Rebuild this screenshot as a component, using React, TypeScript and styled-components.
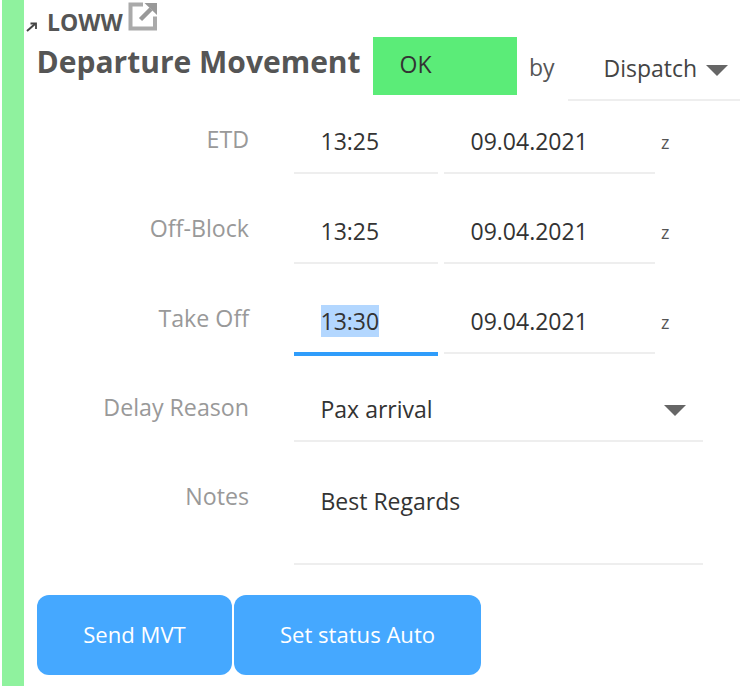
import React from "react";
import styled, { createGlobalStyle } from "styled-components";

const Global = createGlobalStyle`
  html, body { margin: 0; padding: 0; background: #fff; }
  body { font-family: "Open Sans", "Liberation Sans", sans-serif; color: #333; }
  ::selection { background: #b3d7ff; }
`;

const Page = styled.div`
  width: 740px;
  height: 686px;
  overflow: hidden;
  padding-left: 2px;
  box-sizing: border-box;
  display: flex;
`;
const Stripe = styled.div`
  width: 22px;
  flex: none;
  background: #8ff29e;
`;
const Content = styled.div`
  flex: 1;
  min-width: 0;
  display: flex;
  flex-direction: column;
`;
const Airport = styled.div`
  height: 37px;
  display: flex;
  align-items: flex-start;
  padding-left: 2px;
`;
const AirportName = styled.span`
  font-size: 23px;
  line-height: 30px;
  font-weight: 700;
  color: #555;
  margin: 7px 0 0 9px;
`;
const TinyArrow = styled.svg`
  margin-top: 20px;
  flex: none;
`;
const ExternalIcon = styled.svg`
  margin: 1px 0 0 5px;
  flex: none;
`;
const TitleRow = styled.div`
  height: 64px;
  display: flex;
  align-items: flex-start;
  padding-left: 12.5px;
`;
const Title = styled.h1`
  margin: 5px 0 0;
  width: 336.5px;
  flex: none;
  font-size: 30px;
  line-height: 40px;
  font-weight: 700;
  color: #555;
  white-space: nowrap;
`;
const StatusBox = styled.div`
  width: 144px;
  height: 58px;
  flex: none;
  background: #5bec78;
  font-size: 23px;
  line-height: 54px;
  padding-left: 26.5px;
  box-sizing: border-box;
  color: #333;
`;
const By = styled.span`
  font-size: 23px;
  line-height: 31px;
  color: #555;
  margin: 15px 0 0 12px;
  width: 39px;
  flex: none;
`;
const DispatchSelect = styled.div`
  flex: 1;
  height: 64px;
  box-sizing: border-box;
  border-bottom: 2px solid #eee;
  padding: 15px 0 0 35.5px;
  font-size: 23px;
  line-height: 32px;
  display: flex;
  align-items: flex-start;
  white-space: nowrap;
  color: #444;
`;
const Caret = styled.span<{ $top: number }>`
  width: 0;
  height: 0;
  border-left: 11px solid transparent;
  border-right: 11px solid transparent;
  border-top: 11px solid #666;
  margin-top: ${(p) => p.$top}px;
`;
const DispatchCaret = styled(Caret)`
  margin-left: 8.5px;
`;
const Row = styled.div<{ $height: number }>`
  height: ${(p) => p.$height}px;
  display: flex;
  align-items: flex-end;
  padding-right: 37px;
`;
const Label = styled.label<{ $bottom: number }>`
  width: 225px;
  flex: none;
  text-align: right;
  font-size: 23.2px;
  line-height: 32px;
  color: #999;
  align-self: flex-end;
  margin-bottom: ${(p) => p.$bottom}px;
`;
const Field = styled.div<{ $width?: number; $active?: boolean; $height?: number; $top?: number }>`
  margin-left: ${(p) => (p.$width === 144 ? 45 : 6)}px;
  margin-bottom: ${(p) => (p.$active ? -2 : 0)}px;
  width: ${(p) => p.$width ?? 409}px;
  height: ${(p) => p.$height ?? 62}px;
  flex: none;
  box-sizing: border-box;
  border-bottom: ${(p) => (p.$active ? "4px solid #2f9dfb" : "2px solid #eee")};
  padding: ${(p) => p.$top ?? 13}px 0 0 26.5px;
  font-size: 23px;
  line-height: 32px;
  color: #333;
`;
const WideField = styled(Field)`
  margin-left: 45px;
  display: flex;
  justify-content: space-between;
  padding-right: 17px;
`;
const Selected = styled.span`
  background: #b3d7ff;
  display: inline-block;
`;
const Zulu = styled.span`
  margin-left: 6px;
  font-size: 18px;
  line-height: 24px;
  color: #555;
  align-self: flex-end;
  margin-bottom: 20px;
`;
const Actions = styled.div`
  margin: 30px 0 0 13px;
  display: flex;
  gap: 2px;
`;
const Action = styled.button<{ $width: number }>`
  width: ${(p) => p.$width}px;
  height: 80px;
  border: 0;
  border-radius: 12px;
  background: #45a8ff;
  color: #fff;
  font-family: inherit;
  font-size: 22.1px;
  padding: 0 0 2px;
`;

const times = [
  { label: "ETD", time: "13:25", rowH: 73, labelB: 19 },
  { label: "Off-Block", time: "13:25", rowH: 90, labelB: 20 },
  { label: "Take Off", time: "13:30", rowH: 90, active: true, labelB: 20 },
];

export default function App() {
  return (
    <Page>
      <Global />
      <Stripe />
      <Content>
        <Airport>
          <TinyArrow width="12" height="12" viewBox="0 0 12 12" fill="none" stroke="#444" strokeWidth="2">
            <path d="M1 11 L9 4" />
            <path d="M4.5 3.5 H10 V9" strokeWidth="1.8" />
          </TinyArrow>
          <AirportName>LOWW</AirportName>
          <ExternalIcon width="30" height="30" viewBox="0 0 30 30" fill="none">
            <path d="M15 3.5 H2.5 V27.5 H27 V15.5" stroke="#aaa" strokeWidth="4" />
            <path d="M12.5 18.5 L23 8" stroke="#999" strokeWidth="4.5" />
            <path d="M16.5 2 H29 V14 Z" fill="#999" />
          </ExternalIcon>
        </Airport>
        <TitleRow>
          <Title>Departure Movement</Title>
          <StatusBox>OK</StatusBox>
          <By>by</By>
          <DispatchSelect>
            Dispatch
            <DispatchCaret $top={13} />
          </DispatchSelect>
        </TitleRow>
        {times.map((r) => (
          <Row key={r.label} $height={r.rowH}>
            <Label $bottom={r.labelB}>{r.label}</Label>
            <Field $width={144} $active={r.active} $height={r.active ? 64 : 62}>
              {r.active ? <Selected>{r.time}</Selected> : r.time}
            </Field>
            <Field $width={211}>09.04.2021</Field>
            <Zulu>z</Zulu>
          </Row>
        ))}
        <Row $height={88}>
          <Label $bottom={19}>Delay Reason</Label>
          <WideField $height={62}>
            Pax arrival
            <Caret $top={12} />
          </WideField>
        </Row>
        <Row $height={123}>
          <Label $bottom={53}>Notes</Label>
          <WideField $height={95} $top={15}>Best Regards</WideField>
        </Row>
        <Actions>
          <Action $width={195}>Send MVT</Action>
          <Action $width={247}>Set status Auto</Action>
        </Actions>
      </Content>
    </Page>
  );
}
